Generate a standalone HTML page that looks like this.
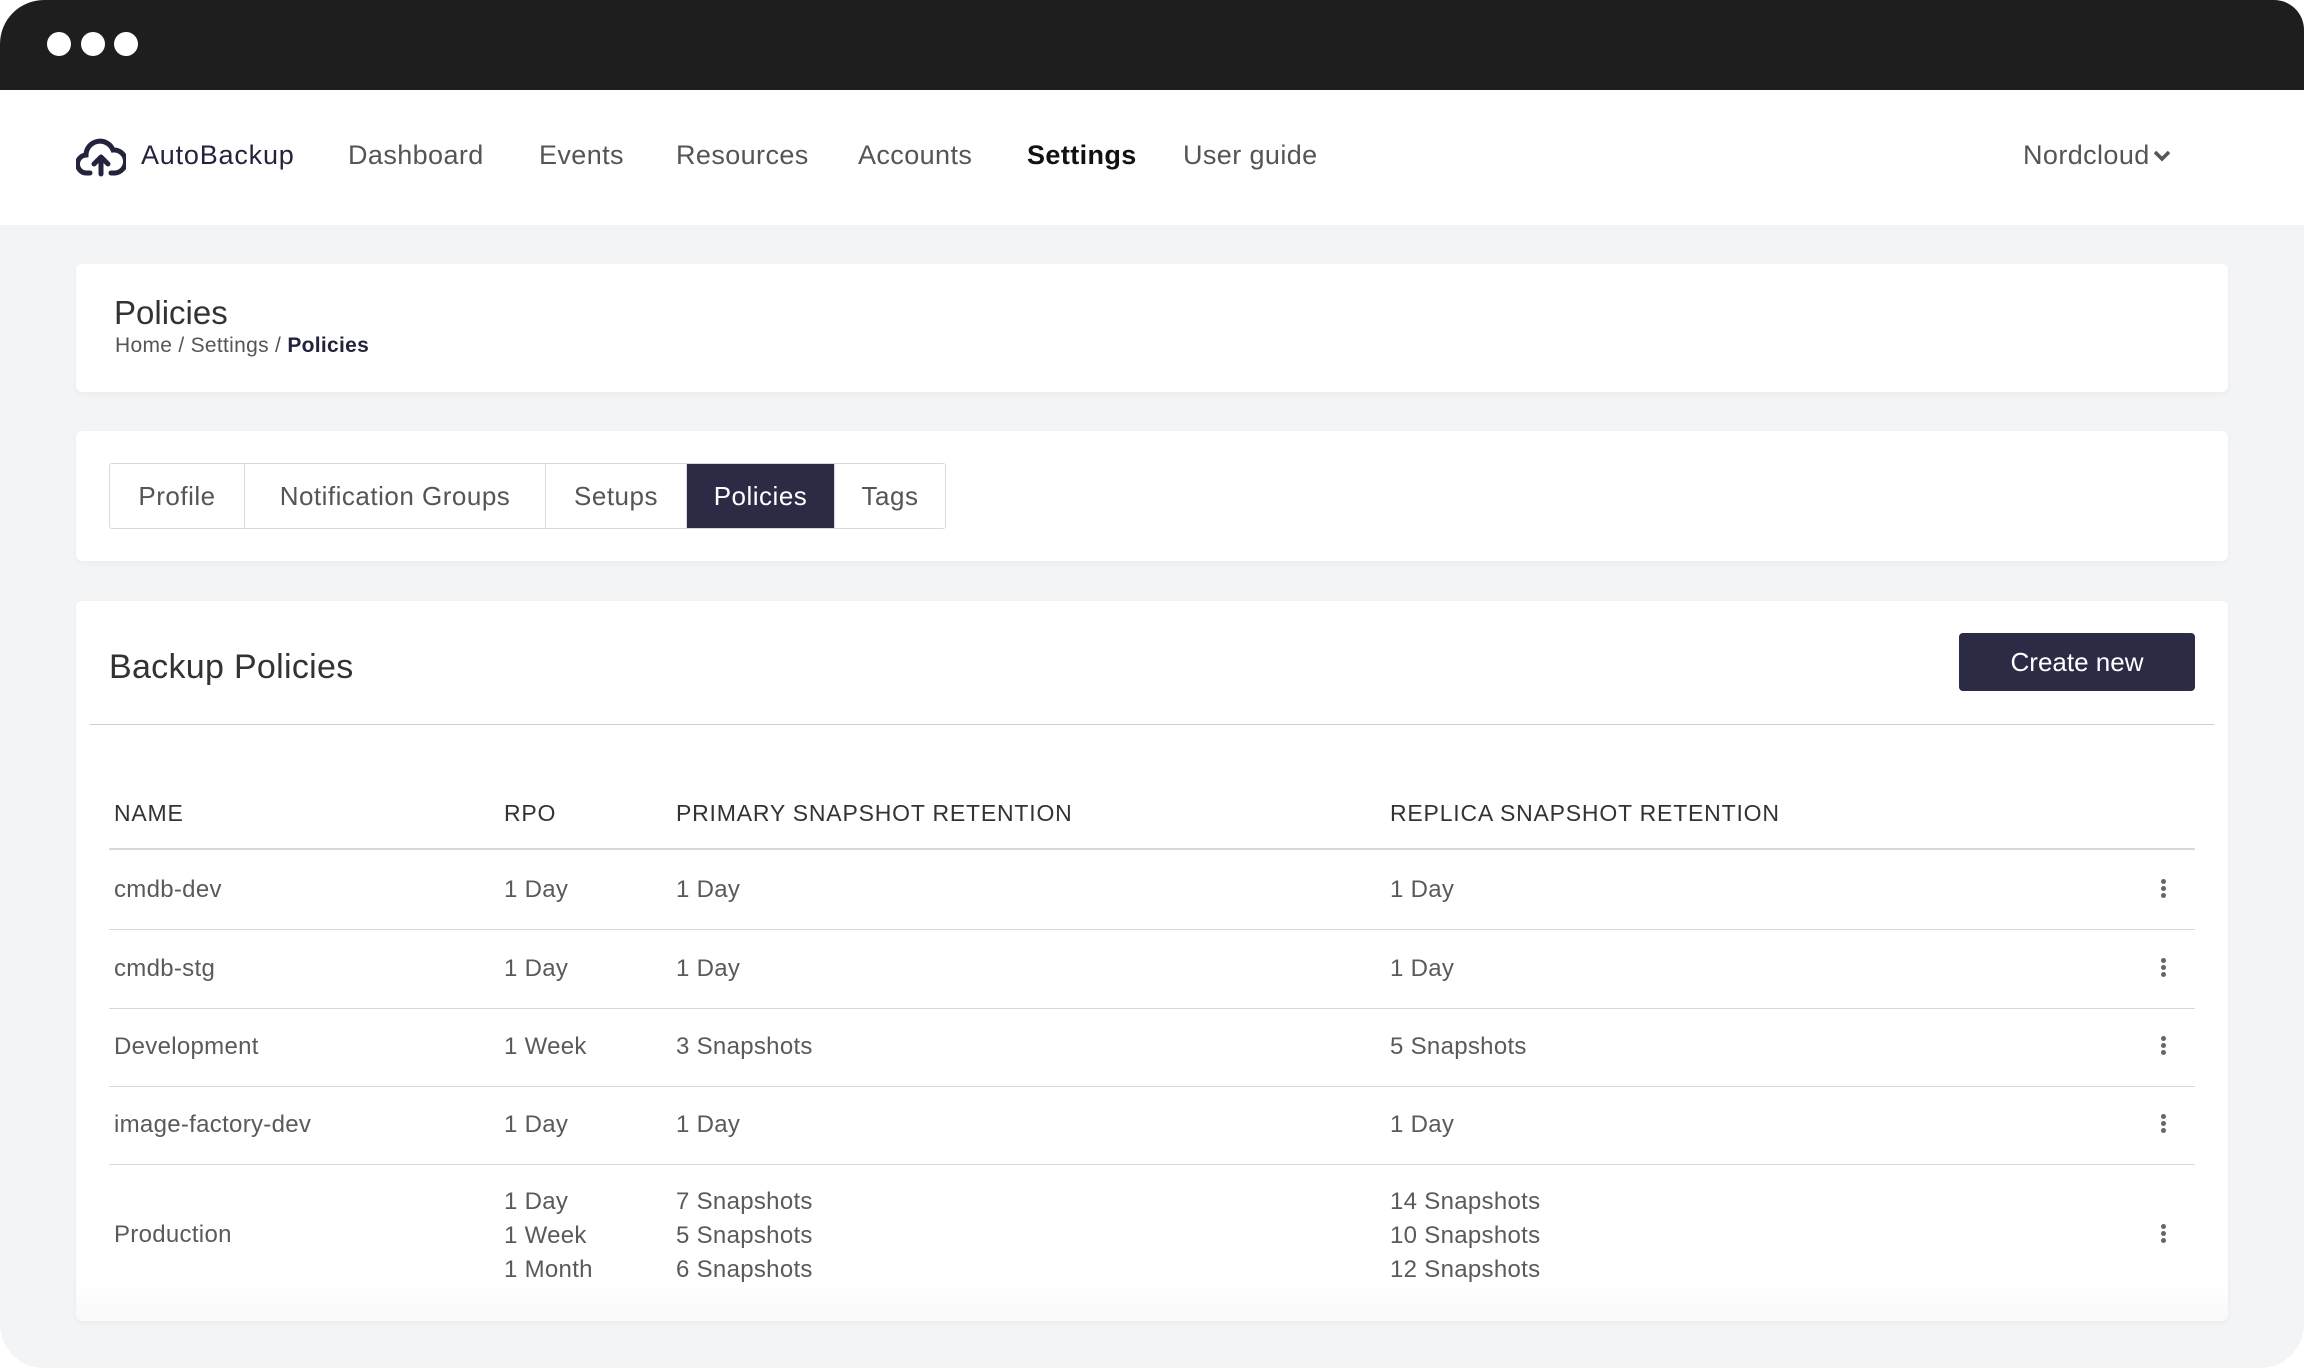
<!DOCTYPE html>
<html><head><meta charset="utf-8"><style>
*{box-sizing:border-box;margin:0;padding:0}
body{width:2304px;height:1368px;overflow:hidden;background:#fff;font-family:"Liberation Sans",sans-serif}
.win{position:absolute;left:0;top:0;width:2304px;height:1368px;background:#f3f4f6;border-radius:44px 30px 44px 44px;overflow:hidden}
.top{position:absolute;left:0;top:0;width:2304px;height:90px;background:#1e1e1e}
.dot{position:absolute;top:32px;width:24px;height:24px;border-radius:50%;background:#fff}
.nav{position:absolute;left:0;top:90px;width:2304px;height:135px;background:#fff}
.nav span{position:absolute;top:50px;font-size:27px;color:#555;letter-spacing:.4px}
.card{position:absolute;left:76px;width:2152px;background:#fff;border-radius:6px;box-shadow:0 2px 6px rgba(0,0,0,.04)}
.tabs{position:absolute;left:33px;top:32px;height:66px;display:flex;border:1px solid #d9d9dd;border-radius:3px}
.tabs div{height:64px;line-height:64px;text-align:center;font-size:26px;color:#555;border-right:1px solid #d9d9dd;letter-spacing:.5px}
.tabs div.a{background:#2b2b45;color:#fff}
.c{position:absolute;font-size:24px;color:#5a5a5a;letter-spacing:.3px}
.h{position:absolute;font-size:23px;color:#333;top:199px;letter-spacing:.8px}
.ln{position:absolute;left:33px;width:2086px;height:1px;background:#d8d8d8}
.k{position:absolute;left:2085px;width:6px}
.k i{display:block;width:5px;height:5px;border-radius:50%;background:#666;margin-bottom:2px}
</style></head><body>
<div class="win">
<div class="top"><div class="dot" style="left:47px"></div><div class="dot" style="left:81px"></div><div class="dot" style="left:114px"></div></div>
<div class="nav">
<svg style="position:absolute;left:76px;top:48px" width="50" height="40" viewBox="0 0 50 40"><path d="M14 35H11A9 9 0 0 1 10 17A14 14 0 0 1 37 12A11 11 0 0 1 39 35H35" fill="none" stroke="#23233d" stroke-width="5" stroke-linecap="round"/><path d="M25 36V20M18 26L25 19L32 26" fill="none" stroke="#23233d" stroke-width="5" stroke-linecap="round" stroke-linejoin="round"/></svg>
<span style="left:141px;color:#23233d;font-weight:500;letter-spacing:.8px">AutoBackup</span>
<span style="left:348px">Dashboard</span>
<span style="left:539px">Events</span>
<span style="left:676px">Resources</span>
<span style="left:858px">Accounts</span>
<span style="left:1027px;color:#111;font-weight:bold">Settings</span>
<span style="left:1183px">User guide</span>
<span style="left:2023px">Nordcloud<svg width="20" height="16" viewBox="0 0 20 16" style="margin-left:2px"><path d="M3 4L10 11L17 4" fill="none" stroke="#555" stroke-width="3.5"/></svg></span>
</div>
<div class="card" style="top:264px;height:128px">
<div style="position:absolute;left:38px;top:30px;font-size:33px;color:#333">Policies</div>
<div style="position:absolute;left:39px;top:70px;font-size:21px;color:#555;letter-spacing:.3px">Home / Settings / <b style="color:#23233d;font-weight:600">Policies</b></div>
</div>
<div class="card" style="top:431px;height:130px">
<div class="tabs"><div style="width:135px">Profile</div><div style="width:301px">Notification Groups</div><div style="width:141px">Setups</div><div class="a" style="width:148px">Policies</div><div style="width:110px;border-right:0">Tags</div></div>
</div>
<div class="card" style="top:601px;height:720px;background:linear-gradient(#fff 680px,#f9f9f9)">
<div style="position:absolute;left:33px;top:47px;font-size:34px;color:#333;letter-spacing:.3px">Backup Policies</div>
<div style="position:absolute;left:1883px;top:32px;width:236px;height:58px;background:#2b2b45;border-radius:4px;color:#fff;font-size:26px;line-height:58px;text-align:center">Create new</div>
<div style="position:absolute;left:14px;top:123px;width:2124px;height:1px;background:#ccc"></div>
<div class="h" style="left:38px">NAME</div><div class="h" style="left:428px">RPO</div><div class="h" style="left:600px">PRIMARY SNAPSHOT RETENTION</div><div class="h" style="left:1314px">REPLICA SNAPSHOT RETENTION</div>
<div class="ln" style="top:247px;height:2px"></div>
<div class="c" style="left:38px;top:275px">cmdb-dev</div><div class="c" style="left:428px;top:275px">1 Day</div><div class="c" style="left:600px;top:275px">1 Day</div><div class="c" style="left:1314px;top:275px">1 Day</div>
<div class="k" style="top:278px"><i></i><i></i><i></i></div>
<div class="ln" style="top:328px"></div>
<div class="c" style="left:38px;top:354px">cmdb-stg</div><div class="c" style="left:428px;top:354px">1 Day</div><div class="c" style="left:600px;top:354px">1 Day</div><div class="c" style="left:1314px;top:354px">1 Day</div>
<div class="k" style="top:357px"><i></i><i></i><i></i></div>
<div class="ln" style="top:407px"></div>
<div class="c" style="left:38px;top:432px">Development</div><div class="c" style="left:428px;top:432px">1 Week</div><div class="c" style="left:600px;top:432px">3 Snapshots</div><div class="c" style="left:1314px;top:432px">5 Snapshots</div>
<div class="k" style="top:435px"><i></i><i></i><i></i></div>
<div class="ln" style="top:485px"></div>
<div class="c" style="left:38px;top:510px">image-factory-dev</div><div class="c" style="left:428px;top:510px">1 Day</div><div class="c" style="left:600px;top:510px">1 Day</div><div class="c" style="left:1314px;top:510px">1 Day</div>
<div class="k" style="top:513px"><i></i><i></i><i></i></div>
<div class="ln" style="top:563px"></div>
<div class="c" style="left:38px;top:620px">Production</div>
<div class="c" style="left:428px;top:584px;line-height:34px">1 Day<br>1 Week<br>1 Month</div>
<div class="c" style="left:600px;top:584px;line-height:34px">7 Snapshots<br>5 Snapshots<br>6 Snapshots</div>
<div class="c" style="left:1314px;top:584px;line-height:34px">14 Snapshots<br>10 Snapshots<br>12 Snapshots</div>
<div class="k" style="top:623px"><i></i><i></i><i></i></div>
</div>
</div>
</body></html>
